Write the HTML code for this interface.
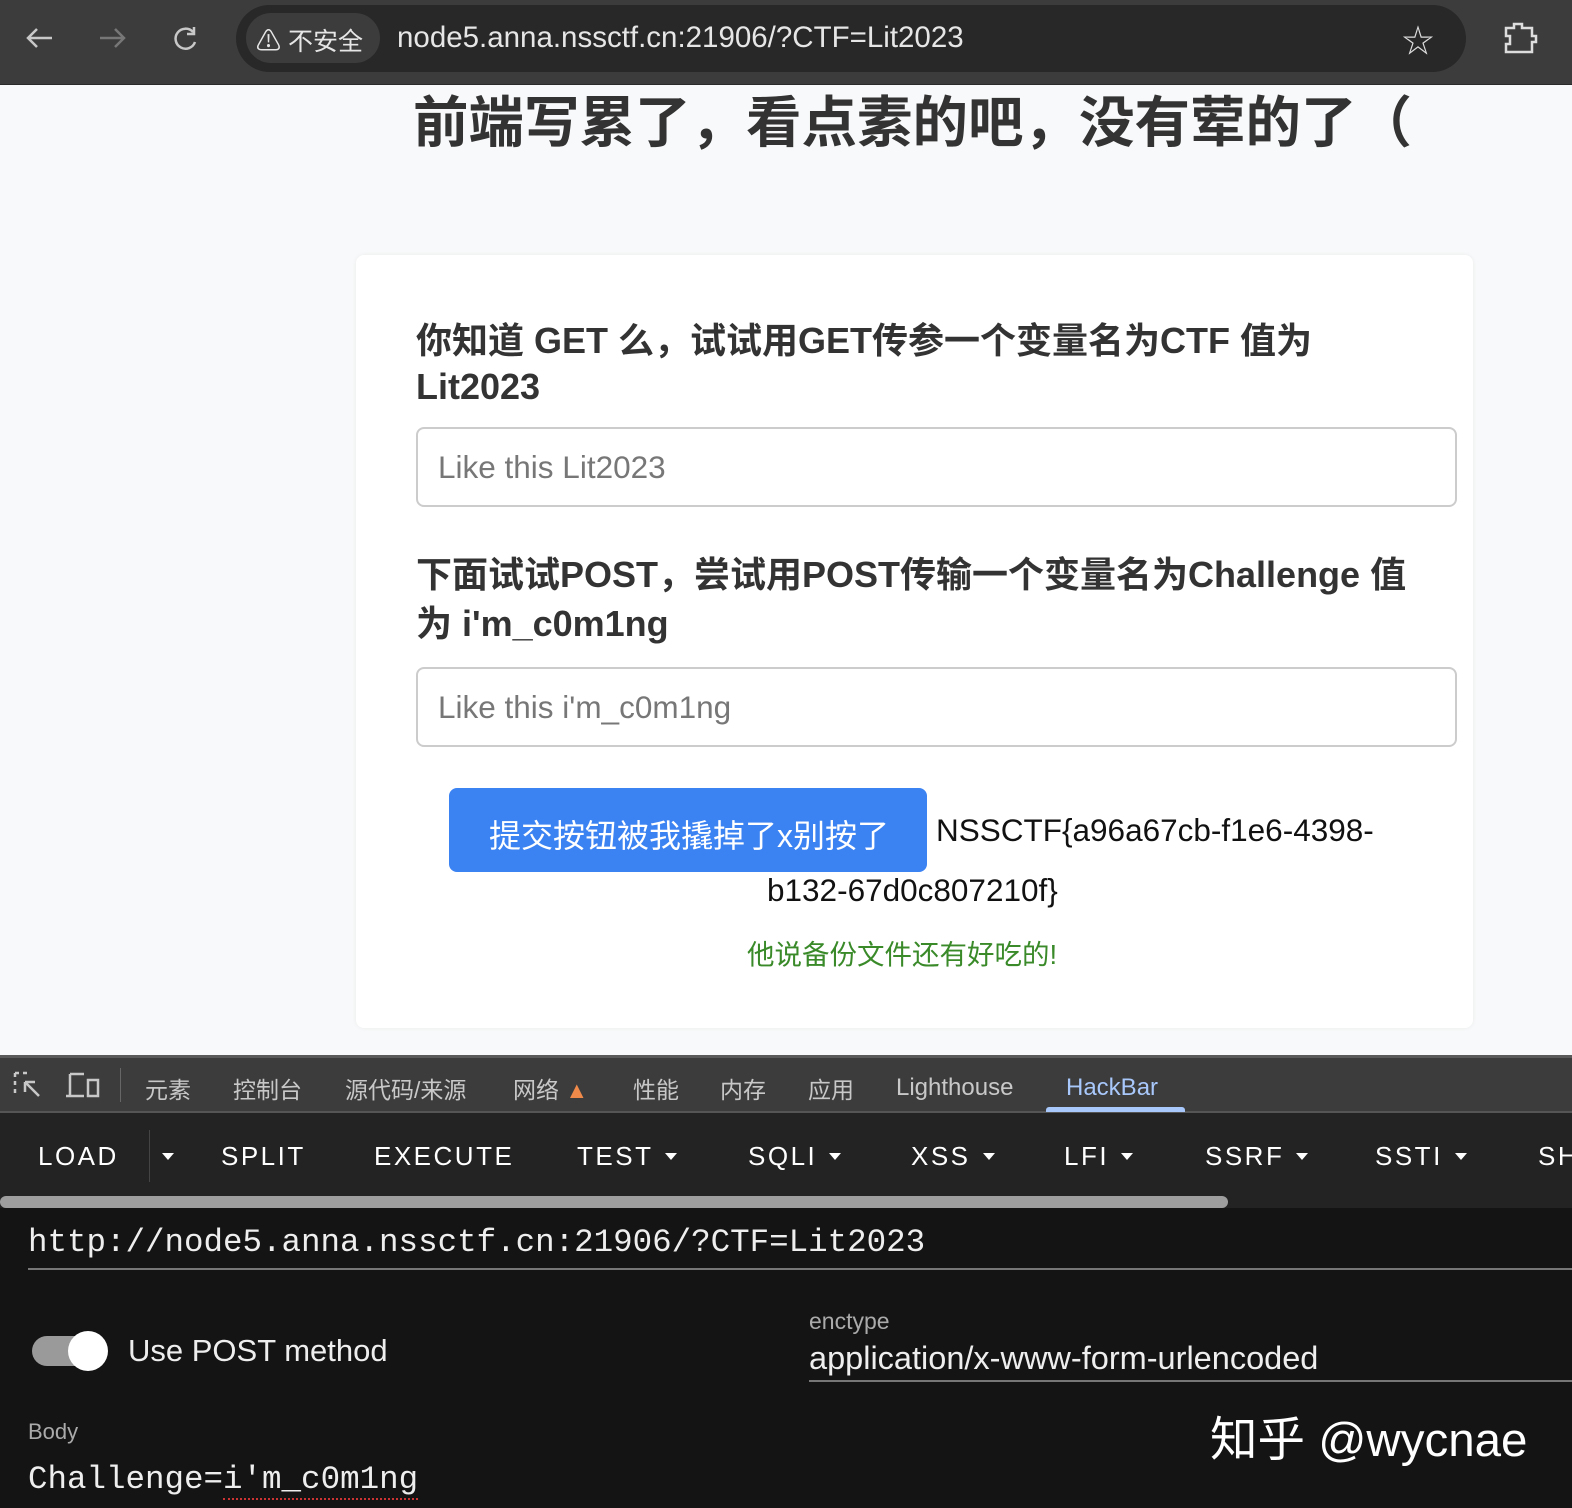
<!DOCTYPE html>
<html><head><meta charset="utf-8"><style>
*{margin:0;padding:0;box-sizing:border-box}
body{width:1572px;height:1508px;overflow:hidden;background:#f8f9fa;font-family:"Liberation Sans","Noto Sans CJK SC",sans-serif;position:relative}
.a{position:absolute;white-space:nowrap}
.mono{font-family:"Liberation Mono","DejaVu Sans Mono",monospace}
.hb{color:#fff;font-size:26px;letter-spacing:2.5px;top:1141px}
.tab{color:#c8c8c8;font-size:23px;top:1073px;line-height:34px;height:34px}
.car{display:inline-block;width:0;height:0;border-left:6px solid transparent;border-right:6px solid transparent;border-top:7px solid #fff;vertical-align:middle;margin-left:12px;margin-bottom:4px}
</style></head><body>
<div class="a" style="left:0;top:0;width:1572px;height:85px;background:#3c3c3c;border-bottom:1px solid #2a2a2a"></div>
<svg class="a" style="left:24px;top:24px" width="200" height="30" viewBox="0 0 200 30">
<path d="M28 14H4M13 5L4 14L13 23" stroke="#c8c8c8" stroke-width="2.5" fill="none"/>
<path d="M76 14H100M91 5L100 14L91 23" stroke="#777" stroke-width="2.5" fill="none"/>
<path d="M169 8A10 10 0 1 0 171 18M170 3V10H163" stroke="#c8c8c8" stroke-width="2.5" fill="none"/>
</svg>
<div class="a" style="left:236px;top:5px;width:1230px;height:67px;border-radius:34px;background:#282828"></div>
<div class="a" style="left:246px;top:13px;width:134px;height:50px;border-radius:25px;background:#3c3c3c"></div>
<div class="a" style="left:256px;top:22px;color:#e6e6e6;font-size:25px">⚠ 不安全</div>
<div class="a" style="left:397px;top:21px;color:#e6e6e6;font-size:29.5px">node5.anna.nssctf.cn:21906/?CTF=Lit2023</div>
<div class="a" style="left:1402px;top:16px;color:#ddd;font-size:32px">☆</div>
<svg class="a" style="left:1502px;top:20px" width="36" height="36"><path d="M4 8H12V4H20V8H30V16H34V22H30V32H4V24H8V16H4Z" stroke="#ddd" stroke-width="2.5" fill="none"/></svg>
<div class="a" style="left:413px;top:78px;font-size:55.5px;font-weight:bold;color:#333">前端写累了，看点素的吧，没有荤的了（</div>
<div class="a" style="left:356px;top:255px;width:1117px;height:773px;background:#fff;border-radius:8px;box-shadow:0 0 4px rgba(0,0,0,0.06)"></div>
<div class="a" style="left:416px;top:318px;font-size:36px;font-weight:bold;color:#333;line-height:46px">你知道 GET 么，试试用GET传参一个变量名为CTF 值为<br>Lit2023</div>
<div class="a" style="left:416px;top:427px;width:1041px;height:80px;border:2px solid #ccc;border-radius:8px"></div>
<div class="a" style="left:438px;top:449px;font-size:31.5px;color:#777">Like this Lit2023</div>
<div class="a" style="left:416px;top:550px;font-size:36px;font-weight:bold;color:#333;line-height:49px">下面试试POST，尝试用POST传输一个变量名为Challenge 值<br>为 i'm_c0m1ng</div>
<div class="a" style="left:416px;top:667px;width:1041px;height:80px;border:2px solid #ccc;border-radius:8px"></div>
<div class="a" style="left:438px;top:689px;font-size:31.5px;color:#777">Like this i'm_c0m1ng</div>
<div class="a" style="left:449px;top:788px;width:478px;height:84px;background:#3b82f2;border-radius:8px"></div>
<div class="a" style="left:489px;top:811px;font-size:32px;color:#fff">提交按钮被我撬掉了x别按了</div>
<div class="a" style="left:936px;top:812px;font-size:31.5px;color:#111">NSSCTF{a96a67cb-f1e6-4398-</div>
<div class="a" style="left:767px;top:872px;font-size:31.5px;color:#111">b132-67d0c807210f}</div>
<div class="a" style="left:747px;top:932px;font-size:27.5px;color:#3a8a2a">他说备份文件还有好吃的!</div>
<div class="a" style="left:0;top:1055px;width:1572px;height:58px;background:#3c3c3c;border-top:3px solid #5a5a5a;border-bottom:2px solid #555"></div>
<svg class="a" style="left:12px;top:1070px" width="95" height="32"><path d="M3 3H7M11 3H15M3 3V7M3 11V15M3 19V23" stroke="#c8c8c8" stroke-width="2.5" fill="none"/><path d="M13 12L27 26M13 12V22M13 12H23" stroke="#c8c8c8" stroke-width="2.5" fill="none"/><path d="M58 4H72M58 4V26M54 26H72M76 10H86V26H76Z" stroke="#c8c8c8" stroke-width="2.5" fill="none"/></svg>
<div class="a" style="left:120px;top:1068px;width:1px;height:34px;background:#666"></div>
<div class="a tab" style="left:145px">元素</div>
<div class="a tab" style="left:233px">控制台</div>
<div class="a tab" style="left:345px">源代码/来源</div>
<div class="a tab" style="left:513px">网络 <span style="color:#f08a4b">▲</span></div>
<div class="a tab" style="left:633px">性能</div>
<div class="a tab" style="left:720px">内存</div>
<div class="a tab" style="left:808px">应用</div>
<div class="a tab" style="left:896px;font-size:24px;top:1071px">Lighthouse</div>
<div class="a tab" style="left:1066px;color:#a8c7fa;font-size:24px;top:1071px">HackBar</div>
<div class="a" style="left:1046px;top:1107px;width:139px;height:5px;background:#a8c7fa;border-radius:3px 3px 0 0"></div>
<div class="a" style="left:0;top:1113px;width:1572px;height:95px;background:#232323"></div>
<div class="a hb" style="left:38px">LOAD</div>
<div class="a" style="left:149px;top:1130px;width:1px;height:52px;background:#444"></div>
<div class="a hb" style="left:150px"><span class="car"></span></div>
<div class="a hb" style="left:221px">SPLIT</div>
<div class="a hb" style="left:374px">EXECUTE</div>
<div class="a hb" style="left:577px">TEST<span class="car"></span></div>
<div class="a hb" style="left:748px">SQLI<span class="car"></span></div>
<div class="a hb" style="left:911px">XSS<span class="car"></span></div>
<div class="a hb" style="left:1064px">LFI<span class="car"></span></div>
<div class="a hb" style="left:1205px">SSRF<span class="car"></span></div>
<div class="a hb" style="left:1375px">SSTI<span class="car"></span></div>
<div class="a hb" style="left:1538px">SH</div>
<div class="a" style="left:0;top:1196px;width:1228px;height:12px;background:#9e9e9e;border-radius:6px"></div>
<div class="a" style="left:0;top:1208px;width:1572px;height:300px;background:#141414"></div>
<div class="a mono" style="left:28px;top:1224px;font-size:32.5px;color:#eee">http://node5.anna.nssctf.cn:21906/?CTF=Lit2023</div>
<div class="a" style="left:28px;top:1268px;width:1544px;height:2px;background:#777"></div>
<div class="a" style="left:32px;top:1336px;width:66px;height:30px;border-radius:15px;background:#9a9a9a"></div>
<div class="a" style="left:68px;top:1331px;width:40px;height:40px;border-radius:20px;background:#fff"></div>
<div class="a" style="left:128px;top:1333px;font-size:31px;color:#eee">Use POST method</div>
<div class="a" style="left:809px;top:1308px;font-size:23px;color:#aaa">enctype</div>
<div class="a" style="left:809px;top:1340px;font-size:32.5px;color:#eee">application/x-www-form-urlencoded</div>
<div class="a" style="left:809px;top:1380px;width:763px;height:2px;background:#777"></div>
<div class="a" style="left:28px;top:1419px;font-size:22px;color:#aaa">Body</div>
<div class="a mono" style="left:28px;top:1461px;font-size:32.5px;color:#eee">Challenge=<span style="border-bottom:2px dotted #c33">i'm_c0m1ng</span></div>
<div class="a" style="left:1210px;top:1401px;font-size:47.5px;color:#fff">知乎 @wycnae</div>
</body></html>
